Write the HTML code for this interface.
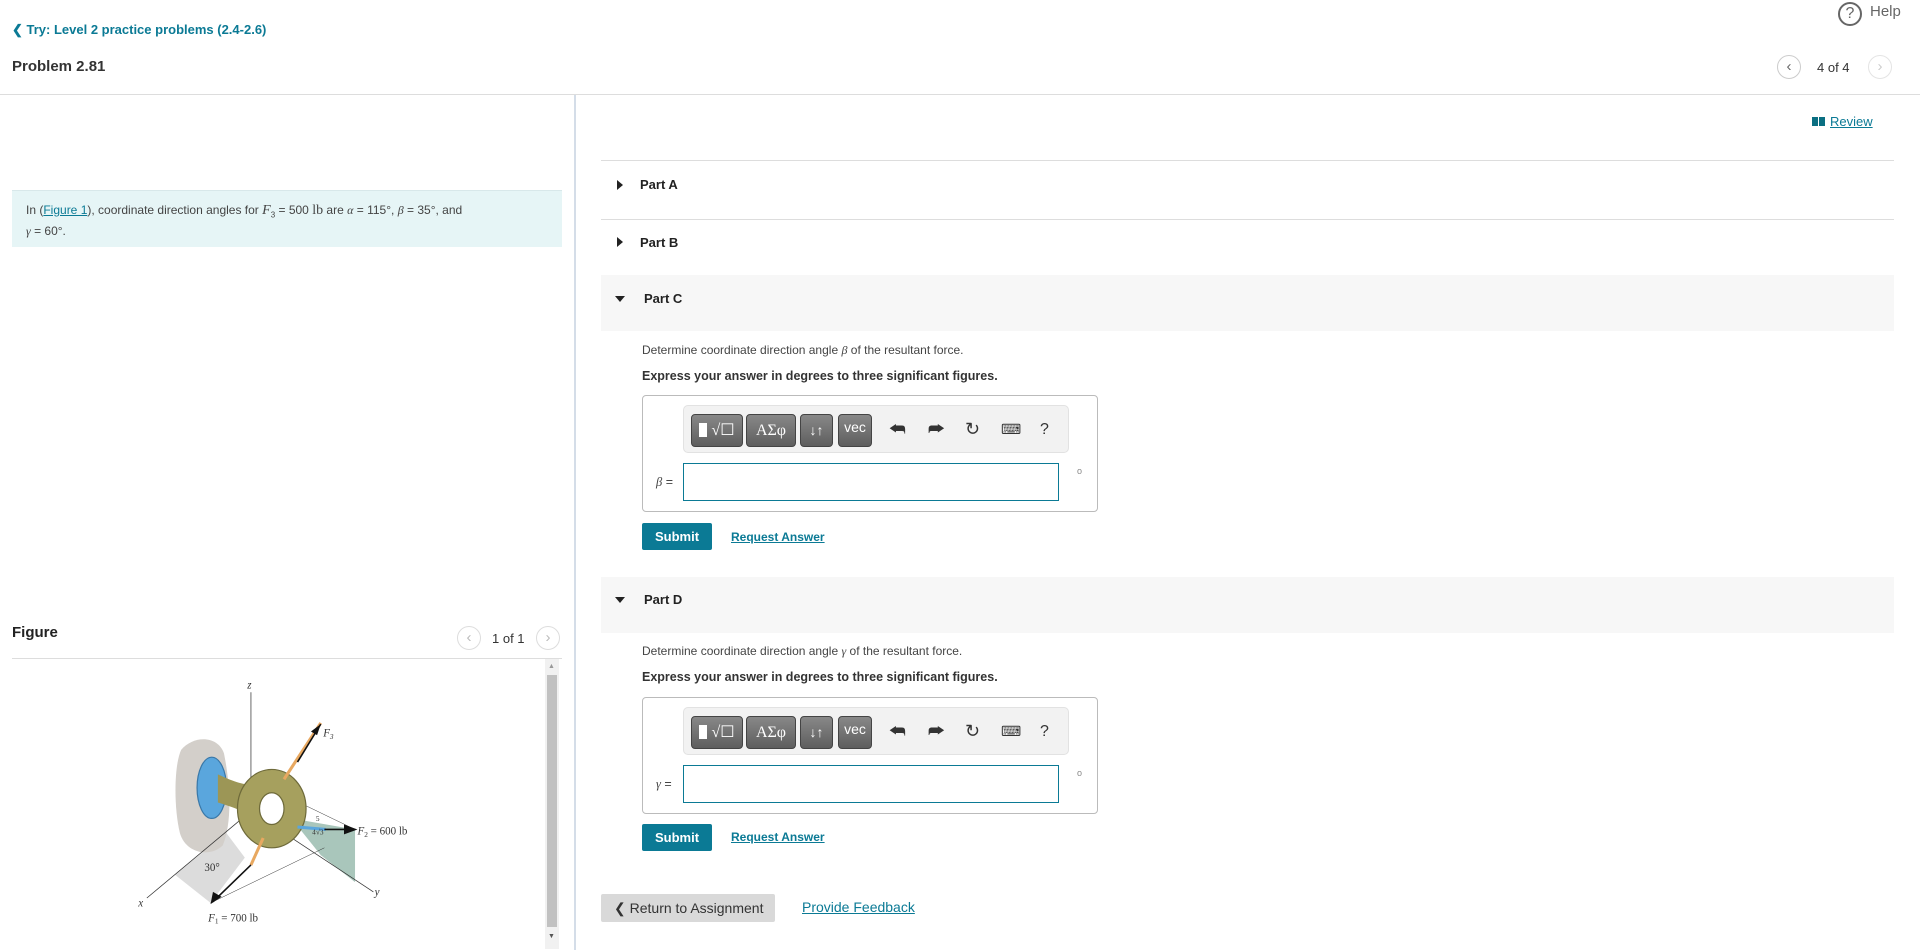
<!DOCTYPE html>
<html><head><meta charset="utf-8"><style>
*{box-sizing:border-box;margin:0;padding:0}
body{width:1920px;height:950px;overflow:hidden;background:#fff;font-family:"Liberation Sans",Arial,sans-serif;color:#333;position:relative}
.a{position:absolute;white-space:nowrap}
.teal{color:#0b7a95}
.hl{position:absolute;height:1px;background:#ddd}
.circ{position:absolute;border:1px solid #ccc;border-radius:50%;width:24px;height:24px;text-align:center;line-height:22px;font-size:15px;color:#666}
.band{position:absolute;left:601px;width:1293px;height:56px;background:#f7f7f7}
.tri{position:absolute;width:0;height:0}
.btext{font-size:13px;font-weight:bold;color:#222}
.box{position:absolute;left:642px;width:456px;height:117px;border:1px solid #bbb;border-radius:4px}
.tb{position:absolute;left:40px;top:9px;width:386px;height:48px;background:#f2f2f2;border:1px solid #e2e2e2;border-radius:5px}
.kb{position:absolute;top:8px;height:33px;background:linear-gradient(#888,#5e5e5e);border:1px solid #444;border-radius:4px;color:#fff;text-align:center;line-height:31px}
.ic{position:absolute;top:8px;font-size:18px;color:#333;line-height:31px}
.inp{position:absolute;left:40px;width:376px;height:38px;border:1.5px solid #0b7a95}
.sub{position:absolute;left:642px;width:70px;height:27px;background:#0b7a95;color:#fff;font-size:13px;font-weight:bold;text-align:center;line-height:27px;border-radius:2px}
.ra{position:absolute;left:731px;font-size:12px;font-weight:bold;color:#0b7a95;text-decoration:underline}
.it{font-family:"Liberation Serif",serif;font-style:italic}
</style></head><body>
<div class="a" style="left:1838px;top:2px;width:24px;height:24px;border:2px solid #666;border-radius:50%;text-align:center;line-height:20px;font-size:16px;color:#666">?</div>
<div class="a" style="left:1870px;top:3px;font-size:15px;color:#666">Help</div>
<div class="a teal" style="left:12px;top:22px;font-size:13px;font-weight:bold">&#10094; Try: Level 2 practice problems (2.4-2.6)</div>
<div class="a" style="left:12px;top:58px;font-size:15px;font-weight:bold;color:#333">Problem 2.81</div>
<div class="circ" style="left:1777px;top:55px">&#8249;</div>
<div class="a" style="left:1817px;top:60px;font-size:13px;color:#333">4 of 4</div>
<div class="circ" style="left:1868px;top:55px;border-color:#e4e4e4;color:#ccc">&#8250;</div>
<div class="hl" style="left:0;top:94px;width:1920px"></div>
<div class="a" style="left:574px;top:95px;width:2px;height:855px;background:#d4dde8"></div>
<div class="a" style="left:1812px;top:117px;width:13px;height:9px;background:#0b6f82;border-left:6px solid #0b6f82;box-shadow:inset 1px 0 0 #fff"></div>
<div class="a teal" style="left:1830px;top:114px;font-size:13px;text-decoration:underline">Review</div>
<div class="a" style="left:12px;top:190px;width:550px;height:57px;background:#e6f5f6;border-top:1px solid #d8e8ea"></div>
<div class="a" style="left:26px;top:202px;font-size:12px;color:#444;line-height:17px">In (<span class="teal" style="text-decoration:underline">Figure 1</span>), coordinate direction angles for <span class="it" style="font-size:14px">F</span><sub style="font-size:8px">3</sub> = 500 <span style="font-family:'Liberation Serif';font-size:14px">lb</span> are <span class="it">α</span> = 115°, <span class="it">β</span> = 35°, and<br><span class="it">γ</span> = 60°.</div>
<div class="hl" style="left:601px;top:160px;width:1293px"></div>
<div class="tri" style="left:617px;top:180px;border-left:6px solid #222;border-top:5px solid transparent;border-bottom:5px solid transparent"></div>
<div class="a btext" style="left:640px;top:177px">Part A</div>
<div class="hl" style="left:601px;top:219px;width:1293px"></div>
<div class="tri" style="left:617px;top:237px;border-left:6px solid #222;border-top:5px solid transparent;border-bottom:5px solid transparent"></div>
<div class="a btext" style="left:640px;top:235px">Part B</div>
<div class="band" style="top:275px"></div>
<div class="tri" style="left:615px;top:296px;border-top:6px solid #222;border-left:5px solid transparent;border-right:5px solid transparent"></div>
<div class="a btext" style="left:644px;top:291px">Part C</div>
<div class="a" style="left:642px;top:343px;font-size:12px;color:#444">Determine coordinate direction angle <span class="it">β</span> of the resultant force.</div>
<div class="a" style="left:642px;top:369px;font-size:12.5px;font-weight:bold;color:#333">Express your answer in degrees to three significant figures.</div>
<div class="box" style="top:395px">
 <div class="tb">
  <div class="kb" style="left:7px;width:52px;font-family:'Liberation Serif';font-size:16px"><span style="display:inline-block;width:8px;height:14px;background:#fff;vertical-align:-2px"></span> √☐</div>
  <div class="kb" style="left:62px;width:50px;font-family:'Liberation Serif';font-size:16px">ΑΣφ</div>
  <div class="kb" style="left:116px;width:33px;font-size:14px">↓↑</div>
  <div class="kb" style="left:154px;width:34px;font-size:14px;line-height:24px">vec</div>
  <div class="ic" style="left:205px">&#11178;</div>
  <div class="ic" style="left:244px">&#11179;</div>
  <div class="ic" style="left:281px">&#8635;</div>
  <div class="ic" style="left:317px;font-size:14px">&#9000;</div>
  <div class="ic" style="left:356px;font-size:16px">?</div>
 </div>
 <div class="a" style="left:13px;top:79px;font-size:12.5px;color:#444"><span class="it">β</span> =</div>
 <div class="inp" style="top:67px"></div>
 <div class="a" style="left:434px;top:70px;font-size:9px;color:#888">o</div>
</div>
<div class="sub" style="top:523px">Submit</div>
<div class="ra" style="top:530px">Request Answer</div>
<div class="band" style="top:577px"></div>
<div class="tri" style="left:615px;top:597px;border-top:6px solid #222;border-left:5px solid transparent;border-right:5px solid transparent"></div>
<div class="a btext" style="left:644px;top:592px">Part D</div>
<div class="a" style="left:642px;top:644px;font-size:12px;color:#444">Determine coordinate direction angle <span class="it">γ</span> of the resultant force.</div>
<div class="a" style="left:642px;top:670px;font-size:12.5px;font-weight:bold;color:#333">Express your answer in degrees to three significant figures.</div>
<div class="box" style="top:697px">
 <div class="tb">
  <div class="kb" style="left:7px;width:52px;font-family:'Liberation Serif';font-size:16px"><span style="display:inline-block;width:8px;height:14px;background:#fff;vertical-align:-2px"></span> √☐</div>
  <div class="kb" style="left:62px;width:50px;font-family:'Liberation Serif';font-size:16px">ΑΣφ</div>
  <div class="kb" style="left:116px;width:33px;font-size:14px">↓↑</div>
  <div class="kb" style="left:154px;width:34px;font-size:14px;line-height:24px">vec</div>
  <div class="ic" style="left:205px">&#11178;</div>
  <div class="ic" style="left:244px">&#11179;</div>
  <div class="ic" style="left:281px">&#8635;</div>
  <div class="ic" style="left:317px;font-size:14px">&#9000;</div>
  <div class="ic" style="left:356px;font-size:16px">?</div>
 </div>
 <div class="a" style="left:13px;top:79px;font-size:12.5px;color:#444"><span class="it">γ</span> =</div>
 <div class="inp" style="top:67px"></div>
 <div class="a" style="left:434px;top:70px;font-size:9px;color:#888">o</div>
</div>
<div class="sub" style="top:824px">Submit</div>
<div class="ra" style="top:830px">Request Answer</div>
<div class="a" style="left:601px;top:894px;width:174px;height:28px;background:#d9d9d9;border-radius:2px;font-size:14px;color:#333;line-height:28px;padding-left:13px">&#10094; Return to Assignment</div>
<div class="a teal" style="left:802px;top:899px;font-size:14px;text-decoration:underline">Provide Feedback</div>
<div class="a" style="left:12px;top:624px;font-size:15px;font-weight:bold;color:#222">Figure</div>
<div class="circ" style="left:457px;top:626px;border-color:#ddd;color:#bbb">&#8249;</div>
<div class="a" style="left:492px;top:631px;font-size:13px;color:#333">1 of 1</div>
<div class="circ" style="left:536px;top:626px;border-color:#ddd;color:#bbb">&#8250;</div>
<div class="hl" style="left:12px;top:658px;width:550px"></div>
<div class="a" style="left:545px;top:659px;width:14px;height:290px;background:#f1f1f1"></div>
<div class="a" style="left:547px;top:675px;width:10px;height:252px;background:#c1c1c1"></div>
<div class="a" style="left:548px;top:663px;font-size:7px;color:#999">▲</div>
<div class="a" style="left:548px;top:933px;font-size:7px;color:#555">▼</div>
<svg class="a" style="left:12px;top:658px" width="533" height="289" viewBox="10 537 435 236">
 <polygon points="143,714 172,737 200,700 185,680" fill="#dcdcdc"/>
 <polygon points="238,668 290,677 290,720 262,698" fill="#a9c6bb"/>
 <path d="M148,612 C158,600 178,600 183,615 C188,640 190,670 182,690 C172,700 152,697 147,680 C142,660 142,625 148,612Z" fill="#d3cfca"/>
 <line x1="205" y1="565" x2="205" y2="662" stroke="#333" stroke-width="0.6"/>
 <line x1="205" y1="662" x2="120" y2="733" stroke="#333" stroke-width="0.6"/>
 <line x1="205" y1="662" x2="305" y2="728" stroke="#333" stroke-width="0.6"/>
 <line x1="205" y1="636" x2="290" y2="677" stroke="#333" stroke-width="0.4"/>
 <line x1="172" y1="737" x2="265" y2="692" stroke="#333" stroke-width="0.4"/>
 <ellipse cx="173" cy="643" rx="12" ry="25" fill="#5aa6dd" stroke="#3a78a8"/>
 <path d="M178,632 C195,640 200,640 212,642 L212,665 C200,664 195,660 178,655Z" fill="#9c9656"/>
 <ellipse cx="222" cy="660" rx="28" ry="32" fill="#a6a05e" stroke="#6e6a3a"/>
 <ellipse cx="222" cy="660" rx="10" ry="13" fill="#fff" stroke="#6e6a3a"/>
 <line x1="232" y1="636" x2="262" y2="590" stroke="#e8a860" stroke-width="2.5"/>
 <line x1="243" y1="675" x2="266" y2="677" stroke="#5aa6dd" stroke-width="2.5"/>
 <line x1="215" y1="684" x2="205" y2="706" stroke="#e8a860" stroke-width="2.5"/>
 <line x1="243" y1="622" x2="262" y2="591" stroke="#111" stroke-width="1.3"/>
 <polygon points="262,591 254,597 259,600" fill="#111"/>
 <line x1="265" y1="677" x2="290" y2="677" stroke="#111" stroke-width="1.3"/>
 <polygon points="292,677 281,673 281,681" fill="#111"/>
 <line x1="205" y1="706" x2="174" y2="736" stroke="#111" stroke-width="1.3"/>
 <polygon points="172,738 174,728 181,732" fill="#111"/>
 <g font-family="Liberation Serif,serif" font-size="9" fill="#333">
  <text x="202" y="562" font-style="italic">z</text>
  <text x="264" y="601" font-style="italic">F<tspan font-size="6" dy="2">3</tspan></text>
  <text x="292" y="681"><tspan font-style="italic">F</tspan><tspan font-size="6" dy="2">2</tspan><tspan dy="-2"> = 600 lb</tspan></text>
  <text x="170" y="752"><tspan font-style="italic">F</tspan><tspan font-size="6" dy="2">1</tspan><tspan dy="-2"> = 700 lb</tspan></text>
  <text x="113" y="740" font-style="italic">x</text>
  <text x="306" y="731" font-style="italic">y</text>
  <text x="167" y="711">30°</text>
  <text x="258" y="670" font-size="6">5</text>
  <text x="255" y="681" font-size="6">4√3</text>
 </g>
</svg>
</body></html>
